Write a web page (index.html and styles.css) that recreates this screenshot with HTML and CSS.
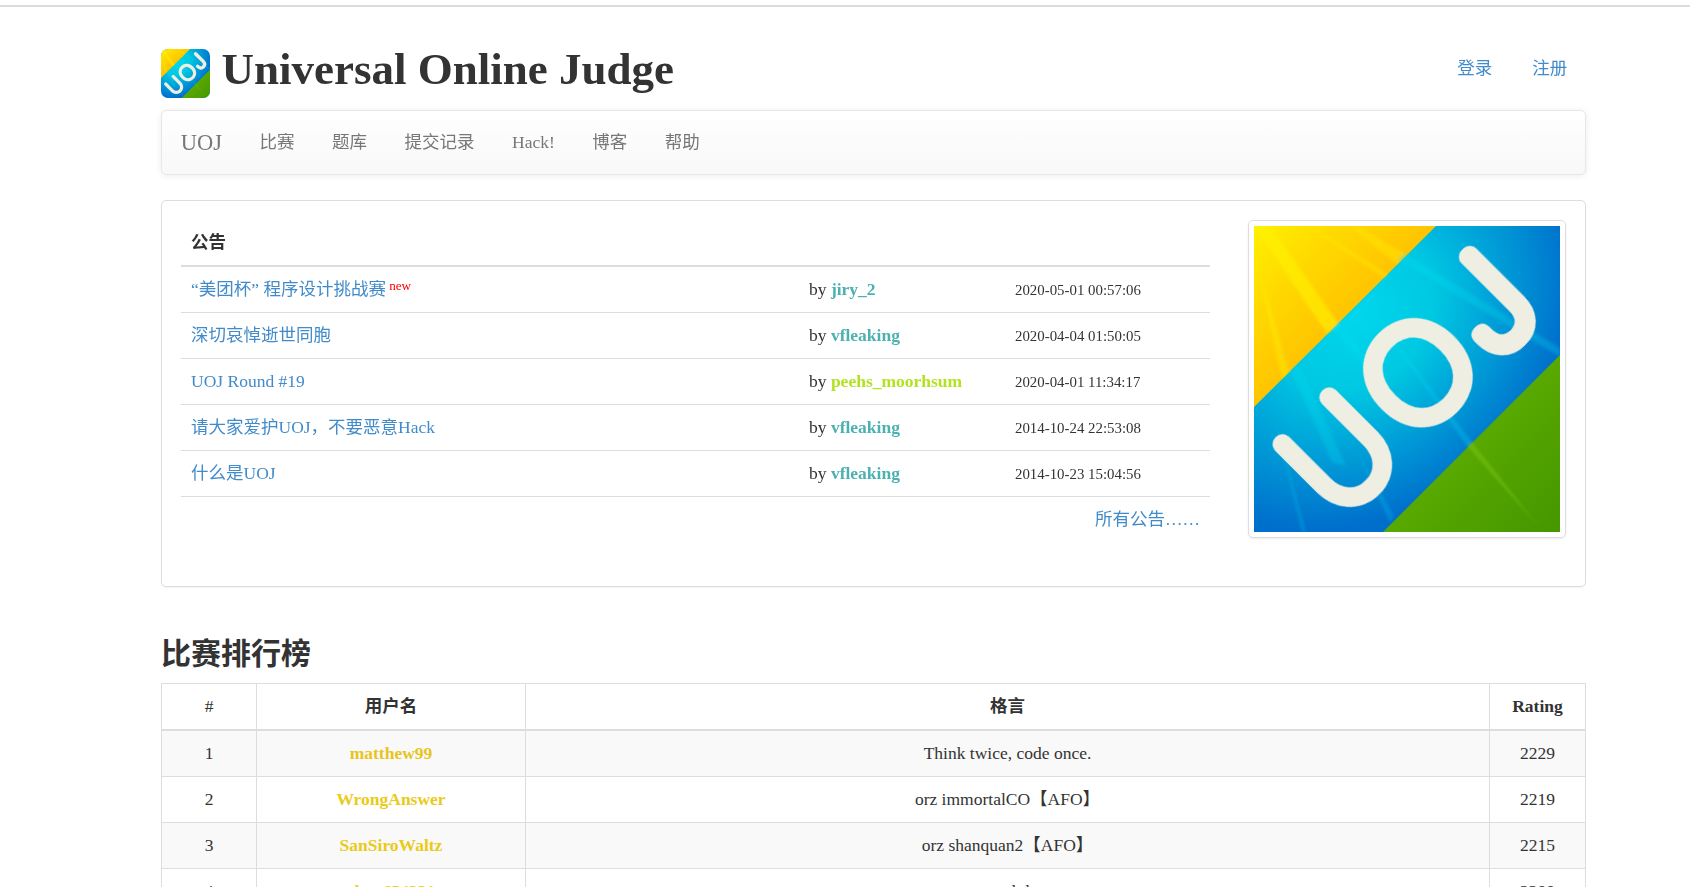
FILE: index.html
```html
<!DOCTYPE html>
<html lang="zh-cn">

<head>
  <meta charset="UTF-8">
  <meta name="viewport" content="width=device-width, initial-scale=1.0">
  <title>Universal Online Judge</title>
  <link rel="stylesheet" href="styles.css">
</head>

<body>
  <!-- logo, used in the header and in the announcement panel -->
  <svg class="defs" width="0" height="0">
    <defs>
      <radialGradient id="band" gradientUnits="userSpaceOnUse" cx="0" cy="0" r="1" gradientTransform="translate(105 90) rotate(-45) scale(235 190)">
        <stop offset="0" stop-color="#00d6ec" />
        <stop offset="0.35" stop-color="#00c8e2" />
        <stop offset="0.7" stop-color="#0098d6" />
        <stop offset="1" stop-color="#006fcc" />
      </radialGradient>
      <linearGradient id="sun" x1="0" y1="0" x2="1" y2="1">
        <stop offset="0" stop-color="#fff000" />
        <stop offset="0.25" stop-color="#ffd800" />
        <stop offset="0.5" stop-color="#ffc400" />
      </linearGradient>
      <linearGradient id="grass" x1="0" y1="0" x2="1" y2="1">
        <stop offset="0" stop-color="#5cb000" />
        <stop offset="0.5" stop-color="#58a900" />
        <stop offset="1" stop-color="#459600" />
      </linearGradient>
      <filter id="soft">
        <feGaussianBlur stdDeviation="1.5" />
      </filter>
    </defs>
    <symbol id="logo" viewBox="0 0 306 306">
      <rect width="306" height="306" fill="url(#band)" />
      <path d="M0 0H182L0 181Z" fill="url(#sun)" />
      <path d="M306 129V306H129Z" fill="url(#grass)" />
      <g filter="url(#soft)">
        <path d="M0 0H16L84 97L73 108Z" fill="#fff200" opacity=".6" />
        <path d="M0 25L35 146L28 153Z" fill="#fff200" opacity=".4" />
        <path d="M52 0H58L134 48L130 52Z" fill="#ffe600" opacity=".5" />
        <path d="M95 0H104L150 27L143 38Z" fill="#ffe600" opacity=".5" />
        <path d="M150 27L306 122V131L143 33Z" fill="#00e4f4" opacity=".25" />
        <path d="M88 95L145 177L133 170L78 102Z" fill="#00e4f4" opacity=".25" />
        <path d="M45 137L92 240L78 236L37 145Z" fill="#00e4f4" opacity=".25" />
        <path d="M108 73L218 216L213 220Z" fill="#00e4f4" opacity=".25" />
        <path d="M218 216L285 301L213 220Z" fill="#7cc810" opacity=".5" />
        <path d="M14 168L52 306H48Z" fill="#00c4ec" opacity=".3" />
        <path d="M100 220L140 290L136 296Z" fill="#00c4ec" opacity=".3" />
      </g>
      <g class="logo-text" transform="rotate(-45)">
        <text class="logo-u" x="-101" y="268">U</text>
        <text x="12" y="266">O</text>
        <text class="logo-j" x="109" y="266">J</text>
      </g>
    </symbol>
  </svg>

  <div class="container">
    <header class="header">
      <h1><svg class="logo-small"><use href="#logo" /></svg><span>Universal Online Judge</span></h1>
      <ul class="nav-pills">
        <li><a href="#">登录</a></li>
        <li><a href="#">注册</a></li>
      </ul>
    </header>

    <nav class="navbar">
      <a class="navbar-brand" href="#">UOJ</a>
      <a href="#">比赛</a>
      <a href="#">题库</a>
      <a href="#">提交记录</a>
      <a href="#">Hack!</a>
      <a href="#">博客</a>
      <a href="#">帮助</a>
    </nav>

    <section class="panel">
      <table class="news">
        <thead>
          <tr>
            <th class="news-title">公告</th>
            <th class="news-author"></th>
            <th class="news-time"></th>
          </tr>
        </thead>
        <tbody>
          <tr>
            <td><a href="#">“美团杯” 程序设计挑战赛</a><sup class="new">&nbsp;new</sup></td>
            <td>by <a class="user teal" href="#">jiry_2</a></td>
            <td><small>2020-05-01 00:57:06</small></td>
          </tr>
          <tr>
            <td><a href="#">深切哀悼逝世同胞</a></td>
            <td>by <a class="user teal" href="#">vfleaking</a></td>
            <td><small>2020-04-04 01:50:05</small></td>
          </tr>
          <tr>
            <td><a href="#">UOJ Round #19</a></td>
            <td>by <a class="user lime" href="#">peehs_moorhsum</a></td>
            <td><small>2020-04-01 11:34:17</small></td>
          </tr>
          <tr>
            <td><a href="#">请大家爱护UOJ，不要恶意Hack</a></td>
            <td>by <a class="user teal" href="#">vfleaking</a></td>
            <td><small>2014-10-24 22:53:08</small></td>
          </tr>
          <tr>
            <td><a href="#">什么是UOJ</a></td>
            <td>by <a class="user teal" href="#">vfleaking</a></td>
            <td><small>2014-10-23 15:04:56</small></td>
          </tr>
          <tr>
            <td class="all-news" colspan="3"><a href="#">所有公告……</a></td>
          </tr>
        </tbody>
      </table>
      <div class="thumbnail">
        <svg class="logo-big"><use href="#logo" /></svg>
      </div>
    </section>

    <h3>比赛排行榜</h3>
    <table class="rank">
      <thead>
        <tr>
          <th class="rank-no">#</th>
          <th class="rank-user">用户名</th>
          <th>格言</th>
          <th class="rank-rating">Rating</th>
        </tr>
      </thead>
      <tbody>
        <tr>
          <td>1</td>
          <td><a class="user gold-1" href="#">matthew99</a></td>
          <td>Think twice, code once.</td>
          <td>2229</td>
        </tr>
        <tr>
          <td>2</td>
          <td><a class="user gold-2" href="#">WrongAnswer</a></td>
          <td>orz immortalCO【AFO】</td>
          <td>2219</td>
        </tr>
        <tr>
          <td>3</td>
          <td><a class="user gold-2" href="#">SanSiroWaltz</a></td>
          <td>orz shanquan2【AFO】</td>
          <td>2215</td>
        </tr>
        <tr>
          <td>4</td>
          <td><a class="user gold-3" href="#">zhou654321</a></td>
          <td>orz lol</td>
          <td>2200</td>
        </tr>
      </tbody>
    </table>
  </div>
</body>

</html>
```
FILE: styles.css
```css
* {
  box-sizing: border-box;
}

body {
  margin: 0;
  height: 887px;
  overflow: hidden;
  font-family: "Liberation Serif", "Noto Sans CJK SC", serif;
  font-size: 17.5px;
  line-height: 25px;
  color: #333;
  background-color: #fff;
}

body::before {
  content: "";
  display: block;
  height: 5px;
  border-bottom: 2px solid #dcdce0;
}

a {
  color: #428bca;
  text-decoration: none;
}

small {
  font-size: 85%;
  line-height: 1;
}

.defs {
  position: absolute;
}

.container {
  width: 1425px;
  margin: 0 auto 0 161px;
}

.header {
  display: flex;
  justify-content: space-between;
  height: 103px;
}

.header h1 {
  display: flex;
  align-items: flex-start;
  margin: 0;
  padding-top: 42px;
  font-size: 45px;
  line-height: 50px;
}

.header h1 span {
  margin-top: -5px;
}

.logo-small {
  width: 49px;
  height: 49px;
  margin-right: 11.5px;
  border-radius: 7px;
}

.nav-pills {
  display: flex;
  gap: 2.5px;
  margin: 0;
  padding: 49px 0 0;
  list-style: none;
}

.nav-pills a {
  display: block;
  padding: 0 18.75px;
}

.navbar {
  display: flex;
  height: 65px;
  padding-top: 19px;
  border: 1px solid #e7e7e7;
  border-radius: 5px;
  background-image: linear-gradient(#fff, #f8f8f8);
  box-shadow: 0 1px 6px rgba(0, 0, 0, 0.075);
}

.navbar a {
  padding: 0 18.75px;
  color: #777;
}

.navbar .navbar-brand {
  font-size: 22.5px;
}

.panel {
  display: flex;
  justify-content: space-between;
  align-items: flex-start;
  height: 387px;
  margin-top: 25px;
  padding: 19px;
  border: 1px solid #ddd;
  border-radius: 5px;
  box-shadow: 0 1px 1px rgba(0, 0, 0, 0.05);
}

table {
  border-collapse: collapse;
  table-layout: fixed;
}

.news {
  width: 1029px;
}

.news th {
  height: 46px;
  padding: 10px;
  text-align: left;
  border-bottom: 2px solid #ddd;
}

.news td {
  height: 46px;
  padding: 10px;
  border-bottom: 1px solid #ddd;
}

.news tr:last-child td {
  border-bottom: 0;
}

.news-title {
  width: 618px;
}

.news-author {
  width: 206px;
}

.news-time {
  width: 205px;
}

.news .all-news {
  text-align: right;
}

.new {
  position: relative;
  top: -0.4em;
  font-size: 75%;
  line-height: 0;
  vertical-align: baseline;
  color: red;
}

.thumbnail {
  width: 318px;
  height: 318px;
  padding: 5px;
  border: 1px solid #ddd;
  border-radius: 5px;
  box-shadow: 0 1px 2px rgba(0, 0, 0, 0.075);
}

.logo-big {
  display: block;
  width: 306px;
  height: 306px;
}

.logo-text {
  font-family: Lato, sans-serif;
  font-size: 131px;
  font-weight: 100;
  text-anchor: middle;
  fill: #efeee2;
  stroke: #efeee2;
  stroke-width: 18px;
  stroke-linejoin: round;
}

.logo-u {
  font-size: 134px;
}

.logo-j {
  font-family: Inter, sans-serif;
  font-size: 128px;
}

h3 {
  margin: 50px 0 13px;
  font-size: 30px;
  line-height: 33px;
}

.rank {
  width: 1425px;
  text-align: center;
}

.rank th,
.rank td {
  height: 46px;
  padding: 10px;
  border: 1px solid #ddd;
}

.rank th {
  border-bottom-width: 2px;
}

.rank tbody tr:nth-child(odd) {
  background-color: #f9f9f9;
}

.rank-no {
  width: 95px;
}

.rank-rating {
  width: 96px;
}

.rank-user {
  width: 269px;
}

.rank .rank-no {
  font-weight: normal;
}

.user {
  font-weight: bold;
}

.teal {
  color: #4bb1b1;
}

.lime {
  color: #b3e21e;
}

.gold-1 {
  color: #e8c51c;
}

.gold-2 {
  color: #e9cb18;
}

.gold-3 {
  color: #e8d41a;
}
```
